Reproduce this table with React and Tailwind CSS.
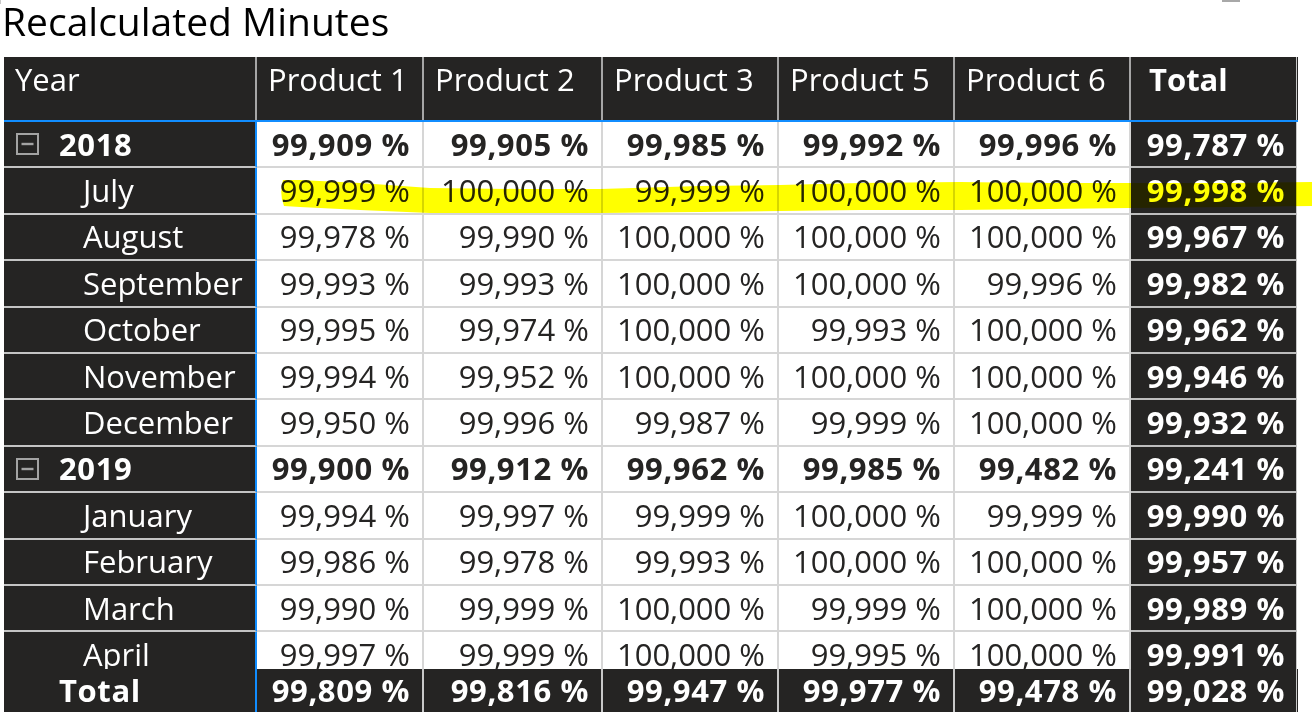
import React from 'react';

const columns = [
  { name: 'Product 1', w: 'w-[167px]' },
  { name: 'Product 2', w: 'w-[179px]' },
  { name: 'Product 3', w: 'w-[176px]' },
  { name: 'Product 5', w: 'w-[176px]' },
  { name: 'Product 6', w: 'w-[176px]' },
];

const rows = [
  { label: '2018', year: true, values: ['99,909', '99,905', '99,985', '99,992', '99,996'], total: '99,787' },
  { label: 'July', values: ['99,999', '100,000', '99,999', '100,000', '100,000'], total: '99,998' },
  { label: 'August', values: ['99,978', '99,990', '100,000', '100,000', '100,000'], total: '99,967' },
  { label: 'September', values: ['99,993', '99,993', '100,000', '100,000', '99,996'], total: '99,982' },
  { label: 'October', values: ['99,995', '99,974', '100,000', '99,993', '100,000'], total: '99,962' },
  { label: 'November', values: ['99,994', '99,952', '100,000', '100,000', '100,000'], total: '99,946' },
  { label: 'December', values: ['99,950', '99,996', '99,987', '99,999', '100,000'], total: '99,932' },
  { label: '2019', year: true, values: ['99,900', '99,912', '99,962', '99,985', '99,482'], total: '99,241' },
  { label: 'January', values: ['99,994', '99,997', '99,999', '100,000', '99,999'], total: '99,990' },
  { label: 'February', values: ['99,986', '99,978', '99,993', '100,000', '100,000'], total: '99,957' },
  { label: 'March', values: ['99,990', '99,999', '100,000', '99,999', '100,000'], total: '99,989' },
  { label: 'April', values: ['99,997', '99,999', '100,000', '99,995', '100,000'], total: '99,991' },
  { label: 'May', values: ['99,998', '99,999', '100,000', '99,996', '100,000'], total: '99,993' },
];

const footer = { values: ['99,809', '99,816', '99,947', '99,977', '99,478'], total: '99,028' };

const CollapseIcon = () => (
  <svg width="23" height="22" viewBox="0 0 23 22" className="shrink-0">
    <rect x="1" y="1" width="21" height="20" fill="none" stroke="#a3a3a3" strokeWidth="2" />
    <line x1="5.5" y1="11" x2="17.5" y2="11" stroke="#a3a3a3" strokeWidth="2.4" />
  </svg>
);

const HeaderRow = () => (
  <div className="flex h-[65px] border-b-2 border-[#118dff] bg-[#252423] text-[31px] leading-[37px] text-white">
    <div className="w-[253px] border-r-2 border-[#a6a6a6] pl-[11px] pt-[4px]">Year</div>
    {columns.map((c) => (
      <div key={c.name} className={`${c.w} border-r-2 border-[#a6a6a6] pl-[11px] pt-[4px]`}>
        {c.name}
      </div>
    ))}
    <div className="w-[166px] border-r border-[#c8c8c8] pl-[18px] pt-[4px] font-bold">Total</div>
  </div>
);

const BodyRow = ({ row }) => {
  const num = row.year ? 'font-bold tracking-[0.6px]' : '';
  return (
    <div className="flex h-[46.4px] shrink-0 text-[31px] leading-[37px]">
      <div className="flex w-[253px] items-center border-r-2 border-b-2 border-r-[#118dff] border-b-[#c4c4c4] bg-[#252423] text-white">
        {row.year ? (
          <div className="flex items-center pl-[12px]">
            <CollapseIcon />
            <span className="pl-[20px] font-bold tracking-[0.6px]">{row.label}</span>
          </div>
        ) : (
          <span className="pl-[79px]">{row.label}</span>
        )}
      </div>
      {columns.map((c, i) => (
        <div
          key={c.name}
          className={`${c.w} flex items-center justify-end border-r-2 border-b-2 border-[#d6d6d6] bg-white pr-[12px] ${num}`}
        >
          {row.values[i]} %
        </div>
      ))}
      <div className="flex w-[166px] items-center justify-end border-r border-b-2 border-r-[#c8c8c8] border-b-[#bdbdbd] bg-[#252423] pr-[11px] font-bold tracking-[0.6px] text-white">
        {row.total} %
      </div>
    </div>
  );
};

const FooterRow = () => (
  <div className="flex h-[43px] bg-[#252423] text-[31px] leading-[37px] font-bold tracking-[0.6px] text-white">
    <div className="flex w-[253px] items-center border-r-2 border-[#118dff] pl-[55px]">Total</div>
    {columns.map((c, i) => (
      <div key={c.name} className={`${c.w} flex items-center justify-end border-r-2 border-[#c8c8c8] pr-[12px]`}>
        {footer.values[i]} %
      </div>
    ))}
    <div className="flex w-[166px] items-center justify-end border-r border-[#c8c8c8] pr-[11px]">{footer.total} %</div>
  </div>
);

const Highlight = () => (
  <svg
    className="pointer-events-none absolute left-0 top-0 mix-blend-multiply"
    width="1312"
    height="717"
    viewBox="0 0 1312 717"
  >
    <path
      fill="#ffff00"
      d="M283 180 L300 180 L360 183 L430 188 L520 189 L600 189 L700 186 L780 185 L860 183 L960 182 L1050 183 L1130 183 L1230 183 L1312 182 L1312 206 L1230 207 L1130 208 L1050 209 L960 210 L860 210 L780 211 L700 212 L600 213 L520 213 L430 213 L360 210 L300 207 L284 206 Q279 194 283 180 Z"
    />
  </svg>
);

export default function App() {
  return (
    <div className="relative h-[717px] w-[1312px] overflow-hidden bg-white font-['Open_Sans',sans-serif] text-[#252423]">
      <div className="h-[57px] pl-[2px] pt-[1px] text-[39px] leading-[40px] text-black">Recalculated Minutes</div>

      <div className="ml-[4px] flex w-[1294px] flex-col">
        <HeaderRow />
        <div className="flex h-[547px] flex-col overflow-hidden">
          {rows.map((r) => (
            <BodyRow key={r.label} row={r} />
          ))}
        </div>
        <FooterRow />
      </div>

      <Highlight />

      {/* visual header bits peeking in at the top edge */}
      <div className="absolute left-[1222px] top-0 h-[2px] w-[18px] bg-[#a8a8a8]" />
      <div className="absolute left-0 top-0 h-[4px] w-px bg-[#c8c8c8]" />
    </div>
  );
}
